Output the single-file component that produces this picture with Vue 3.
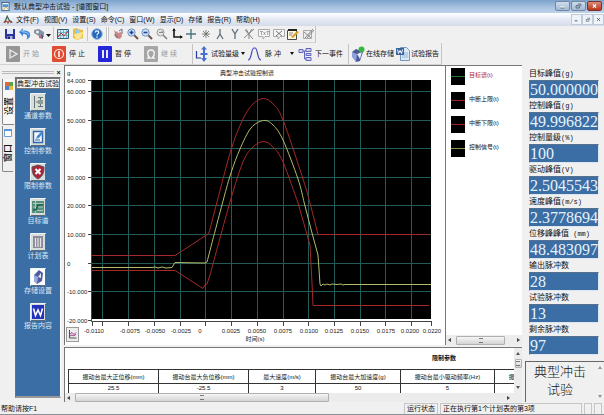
<script setup>
const menus = ['文件(F)', '视图(V)', '设置(S)', '命令(C)', '窗口(W)', '显示(D)', '存储', '报告(R)', '帮助(H)']

const dockItems = [
  { id: 'channel', label: '通道参数' },
  { id: 'control', label: '控制参数' },
  { id: 'limit', label: '限制参数' },
  { id: 'target', label: '目标谱' },
  { id: 'plan', label: '计划表' },
  { id: 'storage', label: '存储设置' },
  { id: 'report', label: '报告内容' },
]

const legend = [
  { label: '目标谱(t)', color: '#1f7d2c', active: true },
  { label: '中断上限(t)', color: '#a01c1c' },
  { label: '中断下限(t)', color: '#a01c1c' },
  { label: '控制信号(t)', color: '#8f9448' },
]

const readings = [
  { id: 'r1', name: '目标峰值', unit: '(g)', value: '50.000000' },
  { id: 'r2', name: '控制峰值', unit: '(g)', value: '49.996822' },
  { id: 'r3', name: '控制量级', unit: '(%)', value: '100' },
  { id: 'r4', name: '驱动峰值', unit: '(V)', value: '2.5045543' },
  { id: 'r5', name: '速度峰值', unit: '(m/s)', value: '2.3778694' },
  { id: 'r6', name: '位移峰峰值', unit: ' (mm)', value: '48.483097' },
  { id: 'r7', name: '输出脉冲数', unit: '', value: '28' },
  { id: 'r8', name: '试验脉冲数', unit: '', value: '13' },
  { id: 'r9', name: '剩余脉冲数', unit: '', value: '97' },
]

const columns = [
  { head: '振动台最大正位移(mm)', value: '25.5', cls: 'c90' },
  { head: '振动台最大负位移(mm)', value: '-25.5', cls: 'c90' },
  { head: '最大速度(m/s)', value: '3', cls: 'c67' },
  { head: '振动台最大加速度(g)', value: '50', cls: 'c85' },
  { head: '振动台最小驱动频率(Hz)', value: '5', cls: 'c94' },
  { head: '振动台最大驱动频率(Hz)', value: '', cls: 'c94' },
  { head: '', value: '', cls: '' },
]

const yTicks = [
  [64, '64.000'], [60, '60.000'], [50, '50.000'], [40, '40.000'], [30, '30.000'],
  [20, '20.000'], [10, '10.000'], [0, '0'], [-10, '-10.000'], [-20, '-20.000'],
].map(([v, label]) => ({ label, y: Math.round(262.6 - v * 2.86) + 0.5 }))

const xGrid = Array.from({ length: 13 }, (_, i) => Math.round(102.4 + i * 25.73) + 0.5)
const xLabels = [
  [94, '-0.0110'], [130, '-0.0075'], [155, '-0.0050'], [181, '-0.0025'], [200, '0'],
  [231, '0.0025'], [257, '0.0050'], [283, '0.0075'], [309, '0.0100'], [334, '0.0125'],
  [360, '0.0150'], [386, '0.0175'], [410, '0.0200'], [432, '0.0220'],
]

// Straight lead-in, Catmull-Rom pulse, straight tail
function trace(lead, pulse, tail) {
  let d = 'M' + lead.map((p) => p.join(' ')).join('L') + 'L' + pulse[0].join(' ')
  for (let i = 0; i < pulse.length - 1; i++) {
    const p0 = pulse[Math.max(i - 1, 0)]
    const p1 = pulse[i]
    const p2 = pulse[i + 1]
    const p3 = pulse[Math.min(i + 2, pulse.length - 1)]
    const a = [p1[0] + (p2[0] - p0[0]) / 6, p1[1] + (p2[1] - p0[1]) / 6]
    const b = [p2[0] - (p3[0] - p1[0]) / 6, p2[1] - (p3[1] - p1[1]) / 6]
    d += `C${a.join(' ')} ${b.join(' ')} ${p2.join(' ')}`
  }
  return d + 'L' + tail.map((p) => p.join(' ')).join('L')
}

const upper = trace(
  [[92, 255.5], [175, 255.5], [205, 236]],
  [[209, 233], [217, 202], [231, 150], [243, 119], [253, 104], [263.5, 98.5], [273, 104], [283, 120], [303, 179], [310, 203]],
  [[318, 234.5], [429, 234.5]],
)
const lower = trace(
  [[92, 270.5], [175, 270.5], [203, 288.5], [205, 285], [207, 284]],
  [[210, 275], [230, 202], [243, 162], [253, 147], [263.5, 141.5], [273, 147], [283, 162], [298, 203]],
  [[310, 245], [312, 283], [313, 305.5], [429, 305.5]],
)
const control = trace(
  [[92, 267.5], [152, 267.5], [155, 267], [158, 268], [162, 267], [166, 268], [172, 267.5], [175, 262.5], [205, 263]],
  [[207, 262], [223, 201], [231, 173], [240, 149], [251, 128], [263.5, 120.5], [273, 125], [283, 140], [298, 179], [304, 202]],
  [[312, 233], [318, 255], [320, 284], [321, 286], [323, 284], [325, 285], [327, 284], [330, 285], [332, 284], [337, 284.5], [341, 284], [343, 285], [345, 284.5], [431, 284.5]],
)
</script>

<template>
  <div class="window">
    <header class="titlebar">
      <svg class="app-icon" viewBox="0 0 10 10"><rect x="1" width="8" height="9" fill="#e9f3fb" stroke="#44607c" /><path d="M2 2h6v3H2z" fill="#4f96cf" /><path d="M3 8l2-3 3 2" fill="none" stroke="#d0a030" /></svg>
      <h1>默认典型冲击试验 - [谱图窗口]</h1>
      <div class="win-buttons">
        <button aria-label="最小化"><svg viewBox="0 0 15 10"><path d="M5 6.5h5" stroke="#fff" stroke-width="2" /><path d="M5 7.5h5" stroke="#46566a" /></svg></button>
        <button aria-label="还原"><svg viewBox="0 0 15 10"><path d="M6.500 2.500h4v3M4.500 4.500h4v3h-4z" fill="none" stroke="#46566a" /></svg></button>
        <button class="close" aria-label="关闭"><svg viewBox="0 0 15 10"><path d="M5.500 3l4 4M9.500 3l-4 4" stroke="#fff" stroke-width="1.600" /></svg></button>
      </div>
    </header>

    <nav class="menubar">
      <svg class="menu-icon" viewBox="0 0 12 11"><path d="M2 9L5 1l2 4 3 4" fill="none" stroke="#42664a" stroke-width="1.500" /><path d="M1 9c1-3 4-3 5 0 1-3 4-3 5 0" fill="none" stroke="#a0483c" stroke-width="1.400" /></svg>
      <button v-for="m in menus" :key="m">{{ m }}</button>
      <div class="mdi-buttons">
        <button aria-label="最小化子窗口"><svg viewBox="0 0 10 10"><path d="M3 6.500h3" stroke="#456" /></svg></button>
        <button aria-label="还原子窗口"><svg viewBox="0 0 10 10"><path d="M4.500 3.500h3v2M3.500 5h3v2h-3z" fill="none" stroke="#678" stroke-width=".8" /></svg></button>
        <button aria-label="关闭子窗口"><svg viewBox="0 0 10 10"><path d="M3.500 3.500l3 3M6.500 3.500l-3 3" stroke="#456" /></svg></button>
      </div>
    </nav>

    <div class="toolbar icons">
      <div class="group">
        <button aria-label="保存"><svg viewBox="0 0 12 12"><path d="M1 1h10v10H2l-1-1z" fill="#2c3599" /><path d="M3 1h6v5H3z" fill="#dfe6f5" /><path d="M3.500 8h5v3h-5z" fill="#a8b2dd" /><path d="M4 8.500h2V11H4z" fill="#20286f" /></svg></button>
        <button aria-label="撤销"><svg viewBox="0 0 12 12"><path d="M0 4l4-4v2.500c5-.5 8 2 7 5.500-.4 1.700-2 3-3.500 3.500C9 8 8 6 4 6v2.500z" fill="#3f85d6" /><path d="M1.500 4L4 1.500V4c3 0 5 .5 6 3" fill="none" stroke="#b4dcfa" stroke-width=".8" /></svg></button>
        <button class="wide" aria-label="快照"><svg viewBox="0 0 18 12"><path d="M1 2l5-1 5 3v3L6 8 1 5z" fill="#8794a6" /><circle cx="4.500" cy="4" r="2" fill="#e8eef5" stroke="#566" stroke-width=".6" /><path d="M6 7l4 1v3L6 10z" fill="#c3657a" /><path d="M8 6l3 2-2 3z" fill="#455e87" /><path d="M13 6h5l-2.500 3z" fill="#111" /></svg></button>
      </div>
      <i class="sep"></i>
      <div class="group">
        <button aria-label="网格"><svg viewBox="0 0 12 12"><path d="M.500 1.500h11v9H.500z" fill="#cfeaf3" stroke="#35607c" /><path d="M1 4.500h10M1 7.500h10M3.500 2v8M6.500 2v8M9.500 2v8" stroke="#5f9db4" stroke-width=".7" /><path d="M1 9l3-4 3 3 4-5" fill="none" stroke="#b53636" /></svg></button>
        <button aria-label="打开"><svg viewBox="0 0 12 12"><path d="M1 1l4-1 1 1 5 1v8l-6 2-4-2z" fill="#edbd3d" /><path d="M2 6l9-2-2 6-5 2z" fill="#fbe795" /><path d="M3 1l4 1v3L3 6z" fill="#91cdf0" /></svg></button>
      </div>
      <i class="sep"></i>
      <div class="group">
        <button aria-label="帮助"><svg viewBox="0 0 12 12"><circle cx="6" cy="6" r="5.300" fill="#2567b8" stroke="#92b8e2" /><path d="M4.300 4.600c0-2.400 3.600-2.200 3.400-.2C7.600 5.600 6 5.700 6 7.200M6 8.300v1.400" fill="none" stroke="#fff" stroke-width="1.200" /></svg></button>
      </div>
      <i class="sep double"></i>
      <div class="group spread">
        <button aria-label="拖动"><svg viewBox="0 0 12 12"><path d="M2 2l2 2 1-1 1 2 3-1 1 4-2 3-4-1-2-3 1-1z" fill="#c98a86" /><path d="M7 3l3-2v5M3 6l3 4" fill="none" stroke="#596f8e" /></svg></button>
        <button v-for="n in 2" :key="n" :aria-label="n === 1 ? '放大' : '缩小'"><svg viewBox="0 0 12 12"><path d="M7 7l4 4" stroke="#6d5544" stroke-width="2" /><circle cx="4.500" cy="4.500" r="3.700" fill="#cfe2f3" stroke="#7195be" /><path d="M2.500 4.500h4" stroke="#25459a" stroke-width="1.600" /><path v-if="n === 1" d="M4.500 2.500v4" stroke="#25459a" stroke-width="1.400" /></svg></button>
        <button aria-label="恢复缩放"><svg viewBox="0 0 12 12"><path d="M7 7l4 4" stroke="#777" stroke-width="1.500" /><circle cx="4.500" cy="4.500" r="3.500" fill="#e5e5e5" stroke="#999" /><path d="M3 4.500h4L5.500 3" fill="none" stroke="#888" /></svg></button>
        <button aria-label="坐标轴"><svg viewBox="0 0 12 12"><path d="M3 1v8h8" fill="none" stroke="#181818" stroke-width="1.600" /><path d="M1.300 3L3 0l1.700 3zM9 7.300L12 9l-3 1.700z" fill="#181818" /></svg></button>
        <button aria-label="光标"><svg viewBox="0 0 12 12"><path d="M6 1v10M1 6h10" stroke="#48777d" stroke-width="1.400" /></svg></button>
        <button aria-label="星形光标"><svg viewBox="0 0 12 12"><path d="M6 2v8M2 6h8M3 3l6 6M9 3L3 9" stroke="#666" stroke-width=".8" /></svg></button>
        <button aria-label="谷值光标"><svg viewBox="0 0 12 12"><path d="M6 1v5L3 11M6 6l3 5" fill="none" stroke="#5c7080" stroke-width="1.300" /></svg></button>
        <button aria-label="峰值光标"><svg viewBox="0 0 12 12"><path d="M3 1l3 5 3-5M6 6v5" fill="none" stroke="#5c7080" stroke-width="1.300" /></svg></button>
        <button aria-label="清除光标"><svg viewBox="0 0 12 12"><path d="M3 1l3 5 3-5M6 6v5M1 10L11 1M2 2l8 9" fill="none" stroke="#84858a" /></svg></button>
        <button aria-label="注释"><svg viewBox="0 0 12 12"><path d="M.500 1.500h11v7H7L5 11V8.500H.500z" fill="#f5f5f5" stroke="#aaa" /><path d="M2 3.500h3M3.500 3.500V7M5.500 4l2 3M7.500 4l-2 3M8.500 3.500h2.500M9.700 3.500V7" stroke="#888" stroke-width=".7" /></svg></button>
        <button aria-label="删除注释"><svg viewBox="0 0 12 12"><path d="M.500 1.500h11v7H7L5 11V8.500H.500z" fill="#f5f5f5" stroke="#aaa" /><path d="M3 3l6 5M9 3L3 8" stroke="#777" /></svg></button>
        <button aria-label="编辑"><svg viewBox="0 0 12 12"><path d="M.500 2.500h9v9h-9z" fill="#fff9df" stroke="#4b4b4b" /><path d="M1 2h9" stroke="#222" stroke-width="2" /><path d="M2 5h4M2 7h3" stroke="#888" /><path d="M4 9l6-6 2 1-6 6z" fill="#dba02b" /></svg></button>
        <button aria-label="清除编辑"><svg viewBox="0 0 12 12"><path d="M1.500 2.500h8v8h-8z" fill="#eee" stroke="#aaa" /><path d="M2 4l7 6M3 10l8-9M5 10l7-8" stroke="#888" /></svg></button>
      </div>
    </div>

    <div class="toolbar commands">
      <button class="cmd off"><svg viewBox="0 0 14 16"><rect width="14" height="16" rx="1" fill="#969696" /><path d="M4 4l7 4-7 4z" fill="none" stroke="#eee" stroke-width="1.300" /></svg><span>开 始</span></button>
      <button class="cmd"><svg viewBox="0 0 14 16"><rect width="14" height="16" rx="1" fill="#e14b30" /><circle cx="7" cy="8" r="4.500" fill="none" stroke="#fff0e9" stroke-width="1.200" /><path d="M7 5v6" stroke="#fff" stroke-width="1.500" /></svg><span>停 止</span></button>
      <button class="cmd"><svg viewBox="0 0 14 16"><rect width="14" height="16" rx="1" fill="#2525dc" /><path d="M5 4v8M9 4v8" stroke="#fff" stroke-width="1.800" /></svg><span>暂 停</span></button>
      <button class="cmd off"><svg viewBox="0 0 14 16"><rect width="14" height="16" rx="1" fill="#a6a6a6" /><path d="M3 12h3c-3.500-3-3-8 1-8s4.500 5 1 8h3" fill="none" stroke="#f3f3f3" stroke-width="1.400" /></svg><span>继 续</span></button>
      <i class="sep"></i>
      <button class="cmd drop"><svg viewBox="0 0 14 16"><path d="M1.500 5v7H6" fill="none" stroke="#263c9c" stroke-width="1.200" /><path d="M9 0l3 3.500h-2V7h2.500v2H10v3h2l-3 4-3-4h2V9H5.500V7H8V3.500H6z" fill="#486fd0" /></svg><span>试验量级</span><i class="arrow"></i></button>
      <button class="cmd drop pulse"><svg viewBox="0 0 14 16"><path d="M0 14c4 0 3-12 6-12h1c3 0 2 12 6 12" fill="none" stroke="#4148b8" stroke-width="1.200" /></svg><span>脉 冲</span><i class="arrow"></i></button>
      <button class="cmd"><svg viewBox="0 0 14 16"><path d="M1 3.500h4v3H1zM5 5h3M8 2.500h5v3H8zM8 7.500h5v2H8zM8 11.500h5v3H8zM6.500 5v8H8" fill="#d3d6f0" stroke="#6267bb" /></svg><span>下一事件</span></button>
      <i class="sep"></i>
      <button class="cmd tight"><svg viewBox="0 0 14 16"><path d="M1 6l4-3 7 3-3 9-4 1z" fill="#4b5794" /><path d="M1 6l5 2-1 8-4-5z" fill="#8fa1d8" /><path d="M6 8l5-2-2 7z" fill="#e3e9ff" /><circle cx="10.500" cy="3.500" r="3" fill="#35b843" /></svg><span>在线存储</span></button>
      <button class="cmd tight"><svg viewBox="0 0 14 16"><path d="M4.500 1.500h6l3 3v10h-9z" fill="#dbeaf8" stroke="#7697bb" /><path d="M6 7h6M6 9h6M6 11h6" stroke="#96b5d5" /><path d="M0 2h8v7H0z" fill="#35649f" /><path d="M1.500 3.500l1 4L4 4.500l1.500 3 1-4" fill="none" stroke="#fff" /></svg><span>试验报告</span></button>
    </div>

    <main class="body">
      <aside class="dock">
        <div class="grip"><i></i><button aria-label="关闭面板">×</button></div>
        <div class="dock-main">
          <div class="tabs">
            <button class="tab on"><svg viewBox="0 0 8 8"><path d="M0 0h4v4H0z" fill="#df6b3c" /><path d="M4 0h4v4H4z" fill="#55a54e" /><path d="M0 4h4v4H0z" fill="#4b83cf" /><path d="M4 4h4v4H4z" fill="#e3bd3d" /></svg><span>设置</span></button>
            <button class="tab"><svg viewBox="0 0 8 8"><path d="M.500.500h7v7h-7z" fill="#fff" stroke="#6f9fd5" /><path d="M0 1h8" stroke="#5b95da" stroke-width="2" /></svg><span>窗口</span></button>
          </div>
          <div class="panel">
            <h2>典型冲击试验</h2>
            <ul>
              <li v-for="d in dockItems" :key="d.id">
                <button>
                  <svg viewBox="0 0 16 18">
                    <path d="M.500.500h15v17H.500z" fill="#d7ddda" stroke="#eef3f5" />
                    <path d="M1 17.500h14.500V1" fill="none" stroke="#5a6a78" />
                    <g v-if="d.id === 'channel'"><path d="M4.500 3v12M8 4.500h5M8 13.500h5M6 9h7M10.500 5v8" fill="none" stroke="#627272" /><path d="M8 7h5v4H8z" fill="#8d9c98" /></g>
                    <g v-else-if="d.id === 'control'"><path d="M3.500 3.500h9v11h-9z" fill="#f4f8ff" stroke="#2d66ae" stroke-width="1.400" /><path d="M6 11l1-3 5-5 1.500 1.500L9 10z" fill="#4889cf" /><path d="M5 12h5" stroke="#3b5d88" /></g>
                    <g v-else-if="d.id === 'limit'"><path d="M8 2l6 2c0 6-1 9-6 12C3 13 2 10 2 4z" fill="#a7263b" stroke="#684c55" /><path d="M5.500 6l5 5M10.500 6l-5 5" stroke="#fff" stroke-width="2" /></g>
                    <g v-else-if="d.id === 'target'"><path d="M2 3h12v12H2z" fill="#588e7c" /><path d="M3 5.500h10M3 9h10M3 12.500h10M5.500 3v12" stroke="#b9d9c7" stroke-width=".8" /><path d="M3 12h3l2-5h5" fill="none" stroke="#1a5f4c" stroke-width="1.500" /></g>
                    <g v-else-if="d.id === 'plan'"><path d="M3 3h10v12H3z" fill="#8b8b99" /><path d="M5.500 5v9M8 5v9M10.500 5v9" stroke="#e4e4e8" stroke-width="1.200" /></g>
                    <g v-else-if="d.id === 'storage'"><path d="M1 1h14v16H1z" fill="#fff" /><path d="M4 7l5-5 4 3-1 8-5 3-3-3z" fill="#4f5d9e" /><path d="M4 7l4 2-1 7-3-3z" fill="#9aaade" /><path d="M8 9l3-4v5z" fill="#dfe7ff" /></g>
                    <g v-else><path d="M2 2h12v14H2z" fill="#2332bb" /><path d="M3.500 5.500l2 7L8 7l2.500 5.500 2-7" fill="none" stroke="#fff" stroke-width="1.600" /></g>
                  </svg>
                  <span>{{ d.label }}</span>
                </button>
              </li>
            </ul>
          </div>
        </div>
      </aside>

      <section class="center">
        <div class="upper">
          <div class="chart">
            <svg viewBox="65 66 380 279" role="img" aria-label="典型冲击试验控制谱">
              <rect x="92" y="80" width="339" height="239" fill="#000" />
              <g stroke="#235b58">
                <path v-for="x in xGrid" :key="x" :d="`M${x} 80V319`" />
                <path v-for="t in yTicks.slice(1, 9)" :key="t.y" :d="`M92 ${t.y}H431`" />
              </g>
              <g fill="none">
                <path :d="upper" stroke="#a52828" />
                <path :d="lower" stroke="#a52828" />
                <path :d="control" stroke="#b5bc6c" />
              </g>
              <g stroke="#444">
                <path d="M91.500 80V321.500H431.500" fill="none" />
                <path v-for="t in yTicks" :key="t.label" :d="`M88 ${t.y}H92`" />
                <path v-for="x in xGrid" :key="x" :d="`M${x} 321V326`" />
                <path d="M92.500 321V326M431.500 321V326" />
              </g>
              <g class="axis">
                <text x="67" y="75">g</text>
                <text v-for="t in yTicks" :key="t.label" x="67" :y="t.y + 2">{{ t.label }}</text>
                <text v-for="[x, l] in xLabels" :key="l" :x="x" y="333" text-anchor="middle">{{ l }}</text>
                <text x="255" y="341" text-anchor="middle">时间(s)</text>
                <text x="247" y="75" text-anchor="middle">典型冲击试验控制谱</text>
              </g>
              <rect x="66.500" y="327.500" width="12" height="14" fill="#ececec" stroke="#999" />
              <path d="M69.500 330v8h7" fill="none" stroke="#555" />
              <path d="M70 334l2-1.500 2 2 2-2M70 336l2-1 2 1 2-2" fill="none" stroke="#a0408c" />
            </svg>
          </div>
          <div class="legend">
            <ul>
              <li v-for="l in legend" :key="l.label" :class="{ active: l.active }">
                <svg viewBox="0 0 14 17"><path d="M0 0h14v17H0z" /><path d="M0 8.500h14" :stroke="l.color" /></svg>
                <span>{{ l.label }}</span>
              </li>
            </ul>
            <div class="hscroll"><i class="tri left"></i><i class="thumb mid"></i><i class="tri right"></i></div>
          </div>
        </div>

        <div class="params">
          <div class="params-row">
            <div class="sheet">
              <table>
                <caption>限制参数</caption>
                <thead><tr><th v-for="(c, i) in columns" :key="i" :class="c.cls">{{ c.head }}</th></tr></thead>
                <tbody><tr><td v-for="(c, i) in columns" :key="i">{{ c.value }}</td></tr></tbody>
              </table>
            </div>
            <div class="vscroll"><i class="tri up"></i><i class="thumb"></i><i class="tri down"></i></div>
          </div>
          <div class="hscroll"><i class="tri left"></i><i class="thumb long"></i><i class="tri right end"></i></div>
        </div>
      </section>

      <aside class="readings">
        <dl>
          <div v-for="r in readings" :key="r.id">
            <dt>{{ r.name }}<span class="unit">{{ r.unit }}</span></dt>
            <dd>{{ r.value }}</dd>
          </div>
        </dl>
        <div class="note">
          <p>典型冲击试验</p>
          <div class="note-scroll"><i class="tri up"></i><i class="tri down"></i></div>
        </div>
      </aside>
    </main>

    <footer class="status">
      <span class="hint">帮助请按F1</span>
      <span class="cell">运行状态</span>
      <span class="cell run">正在执行第1个计划表的第3项</span>
      <span class="cell box"></span>
      <span class="cell box"></span>
    </footer>
  </div>
</template>

<style>
body {
  background: #f0f0f0;
}
</style>

<style scoped>
* {
  box-sizing: border-box;
}
.window {
  display: flex;
  flex-direction: column;
  min-height: 100vh;
  overflow: hidden;
  background: #f0f0f0;
  color: #111;
  font: 7px/10px 'Liberation Sans', 'Noto Sans CJK SC', sans-serif;
}
button {
  margin: 0;
  padding: 0;
  border: 0;
  background: none;
  color: inherit;
  font: inherit;
  white-space: nowrap;
}
svg {
  display: block;
  flex: none;
}
ul, dl, dd, h1, h2, p {
  margin: 0;
  padding: 0;
  list-style: none;
}
.titlebar {
  display: flex;
  align-items: center;
  gap: 4px;
  height: 13px;
  padding-left: 1px;
  background: linear-gradient(#7da2cb, #a9c4e2 60%, #bcd2ea);
}
.app-icon {
  width: 9px;
  height: 10px;
}
.titlebar h1 {
  flex: 1;
  font-size: 7px;
  font-weight: 400;
}
.win-buttons {
  display: flex;
  align-self: flex-start;
  padding: 1px 2px;
  gap: 1px;
}
.win-buttons button {
  height: 10px;
  border: 1px solid #71869f;
  border-radius: 2px;
  background: linear-gradient(#cfdded, #a3b9d2);
}
.win-buttons svg {
  width: 13px;
  height: 8px;
}
.win-buttons .close {
  background: linear-gradient(#dc8b78, #b8341c);
  border-color: #7c3026;
}
.menubar {
  display: flex;
  align-items: center;
  gap: 5px;
  height: 13px;
  padding-left: 3px;
  background: linear-gradient(#fff, #e6ebf5 45%, #d4dbea);
}
.menu-icon {
  width: 10px;
  height: 10px;
  margin-right: -2px;
}
.mdi-buttons {
  display: flex;
  margin-left: auto;
}
.mdi-buttons button {
  border: 1px solid #c0ccdc;
  background: #eef3f9;
}
.mdi-buttons svg {
  width: 9px;
  height: 9px;
}
.toolbar {
  display: flex;
  align-items: center;
  align-self: flex-start;
  border-right: 1px solid #c4c4c4;
  border-bottom: 1px solid #d2d2d2;
}
.icons {
  height: 17px;
  padding-left: 3px;
}
.group {
  display: flex;
  gap: 1px;
}
.icons button {
  display: flex;
  justify-content: center;
  width: 14px;
}
.icons svg {
  width: 12px;
  height: 12px;
}
.icons .wide,
.icons .wide svg {
  width: 18px;
}
.spread {
  width: 204px;
  gap: 0;
}
.icons .spread button {
  flex: 1;
}
.sep {
  width: 1px;
  height: 14px;
  margin: 0 2px;
  background: #c4c4c4;
}
.double {
  width: 3px;
  border: solid #c4c4c4;
  border-width: 0 1px;
  background: #fff;
}
.commands {
  height: 22px;
  padding-left: 6px;
}
.cmd {
  display: flex;
  align-items: center;
  gap: 3px;
  margin-right: 3px;
}
.cmd > svg {
  width: 14px;
  height: 16px;
}
.commands > .cmd:nth-child(-n + 4) {
  width: 43px;
}
.cmd.off {
  color: #999;
}
.commands .sep {
  height: 20px;
}
.cmd.drop {
  gap: 2px;
  margin-right: 2px;
}
.cmd.pulse {
  gap: 3px;
  margin-left: 1px;
}
.cmd.tight {
  gap: 1px;
  margin-right: 2px;
}
.pulse .arrow {
  margin: 0 2px 0 6px;
}
.arrow {
  border: 2px solid transparent;
  border-top: 3px solid #111;
  border-bottom: 0;
}
.body {
  display: grid;
  grid-template-columns: 64px minmax(0, 1fr) 80px;
  flex: 1;
}
.dock {
  display: flex;
  flex-direction: column;
  padding: 3px 3px 4px 2px;
}
.grip {
  display: flex;
  align-items: center;
  gap: 2px;
  height: 9px;
}
.grip i {
  flex: 1;
  height: 3px;
  border: solid #bbb;
  border-width: 1px 0;
}
.grip button {
  width: 5px;
  font-weight: 700;
  line-height: 7px;
}
.dock-main {
  display: flex;
  flex: 1;
}
.tabs {
  display: flex;
  flex-direction: column;
  gap: 1px;
  width: 13px;
  padding-top: 2px;
}
.tab {
  display: flex;
  flex-direction: column;
  align-items: center;
  gap: 7px;
  width: 11px;
  height: 46px;
  padding-top: 3px;
  border: solid #888;
  border-width: 0 0 1px 1px;
  border-radius: 0 0 0 2px;
}
.tab.on {
  width: 12px;
  background: #f8f8f8;
}
.tab svg {
  width: 8px;
  height: 8px;
}
.tab span {
  writing-mode: vertical-rl;
  text-orientation: sideways;
  transform: rotate(180deg);
  font-size: 9px;
  font-weight: 500;
  line-height: 10px;
}
.panel {
  flex: 1;
  border: 1px solid #707070;
  border-right-color: #fff;
  border-bottom: 2px solid #999;
  background: #3a6ea5;
}
.panel h2 {
  height: 11px;
  border: 1px solid #777;
  background: #f5f5f5;
  font-size: 7px;
  font-weight: 400;
  line-height: 9px;
  text-align: center;
  white-space: nowrap;
}
.panel ul {
  display: flex;
  flex-direction: column;
  gap: 7px;
  padding-top: 4px;
}
.panel li button {
  display: flex;
  flex-direction: column;
  align-items: center;
  width: 100%;
  color: #dce8f3;
}
.panel li svg {
  width: 16px;
  height: 18px;
}
.center {
  display: flex;
  flex-direction: column;
  gap: 2px;
  padding-right: 2px;
}
.upper {
  display: grid;
  grid-template-columns: minmax(0, 1fr) 76px;
}
.chart {
  border: solid #777;
  border-width: 1px 1px 0;
  background: #fff;
}
.chart svg {
  width: 100%;
  height: auto;
}
.axis {
  fill: #222;
  font: 6px 'Liberation Sans', 'Noto Sans CJK SC', sans-serif;
}
.legend {
  display: flex;
  flex-direction: column;
  justify-content: space-between;
  border-top: 1px solid #777;
  background: #fff;
}
.legend ul {
  display: flex;
  flex-direction: column;
  gap: 7px;
  padding: 2px 5px;
}
.legend li {
  display: flex;
  gap: 4px;
  font-size: 6px;
  line-height: 14px;
}
.legend li svg {
  width: 14px;
  height: 17px;
}
.legend .active {
  color: #b01818;
}
.hscroll {
  display: flex;
  align-items: center;
  height: 10px;
  padding: 0 2px;
  background: #ececec;
}
.tri {
  border: 2px solid transparent;
}
.tri.left {
  border-right: 3px solid #444;
  border-left: 0;
}
.tri.right {
  margin-left: auto;
  border-left: 3px solid #444;
  border-right: 0;
}
.tri.up {
  border-bottom: 3px solid #555;
  border-top: 0;
}
.tri.down {
  border-top: 3px solid #555;
  border-bottom: 0;
}
.thumb {
  display: flex;
  align-items: center;
  justify-content: center;
  width: 7px;
  height: 9px;
  border: 1px solid #b0b0b0;
  border-radius: 1px;
  background: linear-gradient(#f6f6f6, #d4d4d4);
}
.thumb::after {
  content: '';
  width: 4px;
  height: 3px;
  border: solid #777;
  border-width: 1px 0;
}
.thumb.mid {
  width: 49px;
  margin-left: 5px;
}
.thumb.long {
  width: 56%;
  margin-left: 5px;
}
.tri.right.end {
  margin-right: 10px;
}
.params {
  border: solid #777;
  border-width: 1px 0 0 1px;
  background: #fff;
}
.params-row {
  display: flex;
  height: 45px;
}
.params .hscroll {
  height: 9px;
}
.sheet {
  flex: 1;
  min-width: 0;
  padding-left: 3px;
  overflow: hidden;
}
table {
  width: 752px;
  table-layout: fixed;
  border-collapse: collapse;
  font-size: 6px;
}
caption {
  height: 21px;
  font-weight: 700;
  line-height: 21px;
}
th,
td {
  height: 14px;
  padding: 0;
  border: 1px solid #333;
  font-weight: 400;
  line-height: 10px;
  text-align: center;
  white-space: nowrap;
}
td {
  line-height: 8px;
  vertical-align: top;
}
.c90 {
  width: 90px;
}
.c67 {
  width: 67px;
}
.c85 {
  width: 85px;
}
.c94 {
  width: 94px;
}
.vscroll {
  display: flex;
  flex-direction: column;
  align-items: center;
  width: 8px;
  padding: 4px 0;
  background: #ececec;
}
.vscroll .thumb {
  margin-top: 4px;
}
.vscroll .down {
  margin-top: auto;
}
.readings {
  display: flex;
  flex-direction: column;
  gap: 4px;
  padding-top: 4px;
}
.readings dl {
  display: grid;
  grid-template-rows: repeat(9, 1fr);
  flex: 1;
  padding: 0 6px 0 5px;
}
dt {
  height: 11px;
  font-size: 8px;
  line-height: 10px;
  white-space: pre;
}
.unit {
  font-family: 'Liberation Mono', monospace;
  font-size: 7px;
}
dd {
  height: 19px;
  border: 1px solid #56718d;
  border-right-color: #dce6ee;
  border-bottom-color: #dce6ee;
  background: #3a6ea5;
  color: #e8f2fa;
  font: 16px/18px 'Liberation Serif', serif;
  white-space: nowrap;
}
.note {
  display: flex;
  height: 41px;
  margin-left: 1px;
  border: solid #666;
  border-width: 1px 0 0 1px;
}
.note p {
  flex: 1;
  padding: 1px 6px 0 4px;
  font-size: 13px;
  font-weight: 300;
  line-height: 18px;
  text-align: center;
}
.note-scroll {
  display: flex;
  flex-direction: column;
  justify-content: space-between;
  padding: 4px 2px;
  opacity: 0.6;
}
.status {
  display: flex;
  height: 13px;
  gap: 2px;
  padding: 1px 2px 0 1px;
  border-bottom: 1px solid #8a9199;
  line-height: 11px;
}
.hint {
  flex: 1;
}
.cell {
  padding: 0 2px;
  border: 1px solid #c6c6c6;
  border-bottom: 0;
  line-height: 10px;
}
.run {
  width: 142px;
}
.box {
  width: 8px;
}
</style>
